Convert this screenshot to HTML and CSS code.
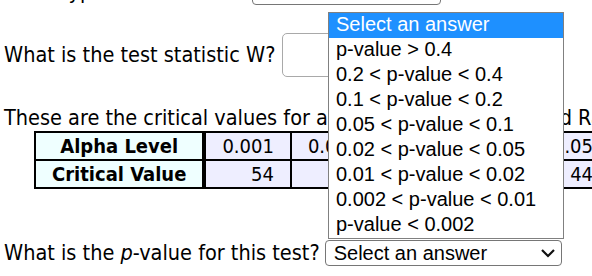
FILE: index.html
```html
<!DOCTYPE html>
<html>
<head>
<meta charset="utf-8">
<link rel="stylesheet" href="styles.css">
</head>
<body>
<div class="page">
  <div class="q q1">
    <span class="label">What type of test is this?</span>
    <div class="select select-top"></div>
  </div>
  <div class="q q2">
    <span class="label">What is the test statistic W?</span>
    <div class="input"></div>
  </div>
  <div class="heading">These are the critical values for a one-tail Wilcoxon Signed Rank test with n = 15:</div>
  <table class="crit">
    <tr>
      <th>Alpha Level</th>
      <td>0.001</td><td>0.005</td><td>0.01</td><td>0.025</td><td>0.05</td><td>0.10</td>
    </tr>
    <tr>
      <th>Critical Value</th>
      <td>54</td><td>51</td><td>49</td><td>47</td><td>44</td><td>41</td>
    </tr>
  </table>
  <div class="q q5">
    <span class="label">What is the <i>p</i>-value for this test?</span>
    <div class="select select-bottom">
      <span>Select an answer</span>
      <svg class="chev" width="16" height="10" viewBox="0 0 16 10"><path d="M2 2 L8 8 L14 2" fill="none" stroke="#111" stroke-width="2.2"/></svg>
    </div>
  </div>
  <div class="menu">
    <div class="opt sel">Select an answer</div>
    <div class="opt">p-value &gt; 0.4</div>
    <div class="opt">0.2 &lt; p-value &lt; 0.4</div>
    <div class="opt">0.1 &lt; p-value &lt; 0.2</div>
    <div class="opt">0.05 &lt; p-value &lt; 0.1</div>
    <div class="opt">0.02 &lt; p-value &lt; 0.05</div>
    <div class="opt">0.01 &lt; p-value &lt; 0.02</div>
    <div class="opt">0.002 &lt; p-value &lt; 0.01</div>
    <div class="opt">p-value &lt; 0.002</div>
  </div>
</div>
</body>
</html>
```
FILE: styles.css
```css
html, body {
  margin: 0;
  padding: 0;
  overflow: hidden;
  background: #fff;
}
.page {
  position: relative;
  padding: 0 4px;
  margin-top: -21px;
  font-family: "DejaVu Sans Condensed", "DejaVu Sans", sans-serif;
  font-stretch: condensed;
  font-size: 21.5px;
  color: #000;
  white-space: nowrap;
}
.q {
  display: flex;
  align-items: center;
}
.label {
  line-height: 26px;
}
.select {
  box-sizing: border-box;
  height: 26px;
  border: 1px solid #767676;
  border-radius: 4px;
  background: #fff;
  font-family: "Liberation Sans", Arial, sans-serif;
  font-stretch: normal;
  font-size: 20px;
}
.select-top {
  width: 189px;
  margin-left: 6px;
}
.q2 {
  margin-top: 28px;
}
.input {
  box-sizing: border-box;
  width: 160px;
  height: 44px;
  margin-left: 7px;
  border: 1px solid #a9a9a9;
  border-radius: 5px;
  background: #fff;
}
.heading {
  margin-top: 28px;
  line-height: 26px;
}
.crit {
  border-collapse: collapse;
  margin-left: 30px;
  font-size: 20px;
}
.crit th, .crit td {
  border: 2px solid #000;
  line-height: 26px;
  padding: 0 16px;
}
.crit th {
  background: #efffff;
  font-weight: bold;
  border-right-width: 4px;
}
.crit td {
  background: #eeeeff;
  text-align: right;
}
.q5 {
  margin-top: 51px;
}
.select-bottom {
  width: 237px;
  margin-left: 5px;
  display: flex;
  align-items: center;
  justify-content: space-between;
  padding: 0 5px 0 8px;
}
.chev {
  display: block;
}
.menu {
  position: absolute;
  left: 328px;
  top: 33px;
  width: 236px;
  box-sizing: border-box;
  border: 1px solid #808080;
  background: #fff;
  font-family: "Liberation Sans", Arial, sans-serif;
  font-stretch: normal;
  font-size: 20px;
  color: #000;
}
.opt {
  height: 25px;
  line-height: 22px;
  padding-left: 7px;
}
.opt.sel {
  background: #1e90ff;
  color: #fff;
}
```
